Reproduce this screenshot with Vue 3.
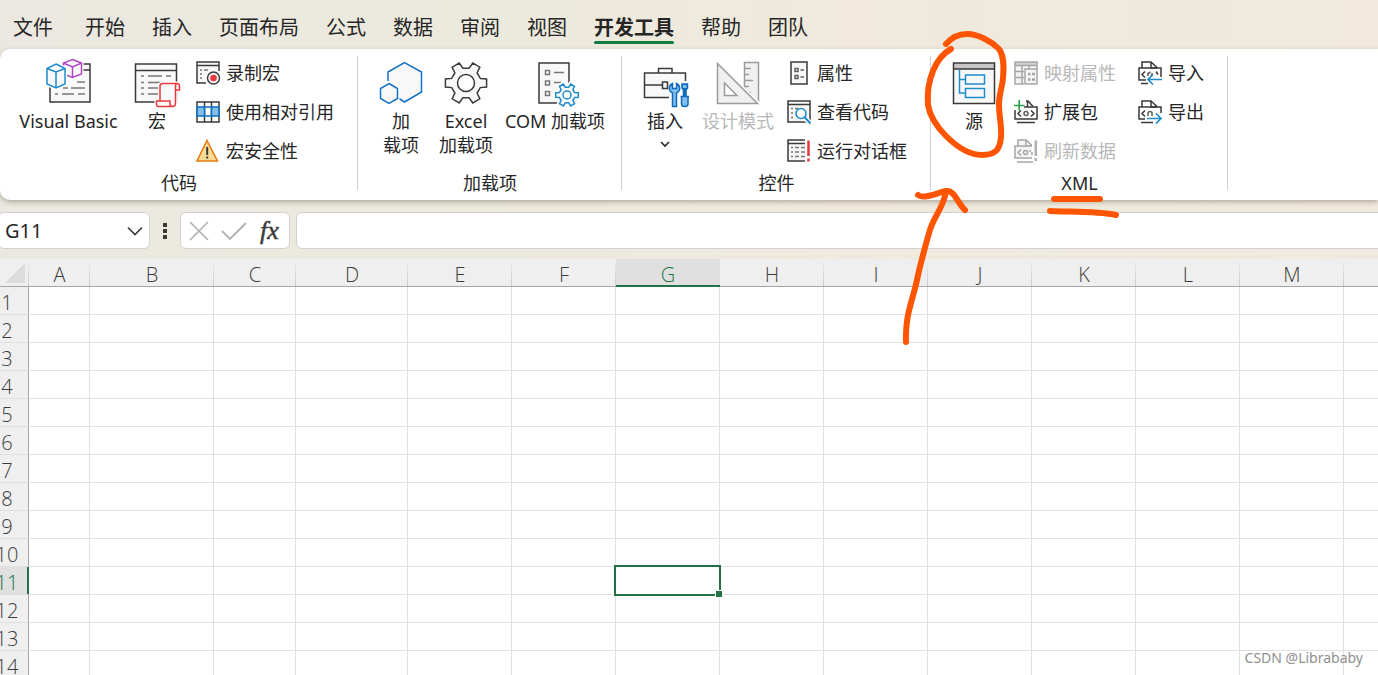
<template>
  <div class="workbook">
    <nav class="tabs">
      <button
        v-for="tab in tabs"
        :key="tab"
        type="button"
        :class="['tab', { active: tab === activeTab }]"
        @click="activeTab = tab"
      >{{ tab }}</button>
    </nav>

    <section class="ribbon">
      <div class="group group-code">
        <div class="group-body">
          <button type="button" class="big">
            <svg class="icon-big" viewBox="0 0 48 48">
              <path d="M35 3H45V41H5V22" fill="#f8f8f8" stroke="#3b3a39" stroke-width="1.5" />
              <path d="M37 9H45" stroke="#3b3a39" stroke-width="1.5" />
              <path d="M32 21H40M18 27H23M26 27H40M10 33H13M17 33H29M33 33H40" stroke="#797775" stroke-width="1.5" />
              <path d="M27.5 -1.5L36.5 2V13L27.5 16.5L18.5 13V2Z" fill="#fafafa" stroke="#fff" stroke-width="4" />
              <path d="M27.5 -1.5L36.5 2V13L27.5 16.5L18.5 13V2ZM18.5 2L27.5 6L36.5 2M27.5 6V16.5" fill="#fafafa" stroke="#b146c2" stroke-width="1.5" />
              <path d="M11 3L20 7.5V23L11 27L2 23V7.5Z" fill="#fafafa" stroke="#fff" stroke-width="4" />
              <path d="M11 3L20 7.5V23L11 27L2 23V7.5ZM2 7.5L11 11L20 7.5M11 11V27" fill="#fafafa" stroke="#1e8bcd" stroke-width="1.5" />
            </svg>
            <span>Visual Basic</span>
          </button>
          <button type="button" class="big">
            <svg class="icon-big" viewBox="0 0 48 48">
              <path d="M2.5 3H43.5V41H2.5Z" fill="#f8f8f8" stroke="#3b3a39" stroke-width="1.5" />
              <path d="M3 9.5H43" stroke="#3b3a39" stroke-width="1.5" />
              <path d="M8 15H11M15 15H29M33 15H38M8 21.5H11M15 21.5H30M8 27H11M15 27H26M8 33H11M15 33H25" stroke="#797775" stroke-width="1.5" />
              <path d="M27 39V25Q27 22.5 30 22.5H44Q46.5 22.5 46.5 25.5V29H42.5V42Q42.5 45.5 39 45.5H25Q23.5 45.5 23.5 43V40H27Z" fill="#fafafa" stroke="#fff" stroke-width="4" />
              <path d="M27 40V25Q27 22.5 30 22.5H44Q46.5 22.5 46.5 25.5V29H42.5V42Q42.5 45.5 39.5 45.5H25.5Q23.5 45.5 23.5 43V40H37V43Q37 45.5 39.5 45.5M42.5 29V25Q42.5 22.5 44 22.5" fill="#fafafa" stroke="#e8383d" stroke-width="1.5" />
            </svg>
            <span>宏</span>
          </button>
          <div class="column">
            <button type="button" class="small">
              <svg class="icon-small" viewBox="0 0 24 24">
                <path d="M10 22H1V1H23V10" fill="#f8f8f8" stroke="#3b3a39" stroke-width="1.5" />
                <path d="M1 4.5H23" stroke="#3b3a39" stroke-width="1.5" />
                <path d="M4 9H6M8 9H12M4 13H6M4 17H6" stroke="#797775" stroke-width="1.5" />
                <circle cx="17.5" cy="17" r="8" fill="#fff" />
                <circle cx="17.5" cy="17" r="6" fill="#fafafa" stroke="#3b3a39" stroke-width="1.5" />
                <circle cx="17.5" cy="17" r="3.3" fill="#e8383d" />
              </svg>
              <span>录制宏</span>
            </button>
            <button type="button" class="small">
              <svg class="icon-small" viewBox="0 0 24 24">
                <path d="M1 2H23V22H1ZM8.5 2V22M15.5 2V22" fill="#fff" stroke="#3b3a39" stroke-width="1.5" />
                <path d="M1 7H8.5V16H1ZM15.5 7H23V16H15.5Z" fill="#83beec" />
                <path d="M0 7H24M0 16H24M1 7V16M8.5 7V16M15.5 7V16M23 7V16" stroke="#0f6cbd" stroke-width="1.5" />
              </svg>
              <span>使用相对引用</span>
            </button>
            <button type="button" class="small">
              <svg class="icon-small" viewBox="0 0 24 24">
                <path d="M11 1.5L21.5 22H1Z" fill="#fadb93" stroke="#e8760e" stroke-width="1.5" />
                <path d="M11.2 8V16M11.2 17.5V19.5" stroke="#3b3a39" stroke-width="2" />
              </svg>
              <span>宏安全性</span>
            </button>
          </div>
        </div>
        <div class="group-title">代码</div>
      </div>

      <div class="group group-addins">
        <div class="group-body">
          <button type="button" class="big">
            <svg class="icon-big" viewBox="0 0 48 48">
              <path d="M11 20V11L27.5 1.5L44.5 11V31L27.5 41L22 38L20 26Z" fill="#f8f8f8" />
              <path d="M11 20V11L27.5 1.5L44.5 11V31L27.5 41L22 37.5" fill="none" stroke="#1473c4" stroke-width="1.5" />
              <path d="M12 22.5L20.5 27.5V37.5L12 42.5L3.5 37.5V27.5Z" fill="#fff" stroke="#fff" stroke-width="4" />
              <path d="M12 22.5L20.5 27.5V37.5L12 42.5L3.5 37.5V27.5Z" fill="#f8f8f8" stroke="#1473c4" stroke-width="1.5" />
            </svg>
            <span>加<br>载项</span>
          </button>
          <button type="button" class="big">
            <svg class="icon-big" viewBox="0 0 48 48">
              <path :d="gearPath(24, 22, 21, 15)" fill="#f8f8f8" stroke="#3b3a39" stroke-width="1.5" />
              <circle cx="24" cy="22" r="8.5" fill="#fff" stroke="#3b3a39" stroke-width="1.5" />
            </svg>
            <span>Excel<br>加载项</span>
          </button>
          <button type="button" class="big">
            <svg class="icon-big" viewBox="0 0 48 48">
              <path d="M38 22V2H8V42H27" fill="#f8f8f8" stroke="#3b3a39" stroke-width="1.5" />
              <path d="M14.5 9.5H18.5V13.5H14.5ZM14.5 20H18.5V24H14.5ZM14.5 30.5H18.5V34.5H14.5ZM23 11.5H33M23 21.5H30" fill="none" stroke="#797775" stroke-width="1.5" />
              <path :d="gearPath(36, 34, 11.5, 8)" fill="#fff" stroke="#fff" stroke-width="5" />
              <path :d="gearPath(36, 34, 11.5, 8)" fill="#f8f8f8" stroke="#1e8bcd" stroke-width="1.5" />
              <circle cx="36" cy="34" r="4" fill="#fff" stroke="#1e8bcd" stroke-width="1.5" />
            </svg>
            <span>COM 加载项</span>
          </button>
        </div>
        <div class="group-title">加载项</div>
      </div>

      <div class="group group-controls">
        <div class="group-body">
          <button type="button" class="big">
            <svg class="icon-big" viewBox="0 0 48 48">
              <path d="M17.5 12V7.5H31V12" fill="none" stroke="#3b3a39" stroke-width="1.5" />
              <path d="M28 36.5H3.5V12H44.5V21L28 26Z" fill="#f8f8f8" />
              <path d="M28 36.5H3.5V12H44.5V20M3.5 24H21.5M21.5 21H26.5V27.5H21.5Z" fill="none" stroke="#3b3a39" stroke-width="1.5" />
              <path d="M31.5 22.5V27.5H35.5V22.5Q38.7 24 38.7 27.5Q38.5 30.5 35.5 32V45.5H31.5V32Q28.5 30.5 28.3 27.5Q28.3 24 31.5 22.5Z" fill="#83beec" stroke="#0f6cbd" stroke-width="1.5" />
              <path d="M41 23H46.5V27L45 29V35H42.5V29L41 27Z" fill="#0f6cbd" stroke="#0f6cbd" stroke-width="1.5" />
              <path d="M42 25.5H45.5" stroke="#83beec" stroke-width="3" />
              <path d="M39.5 35.5H48M40.5 36V43Q40.5 45.5 43.7 45.5Q47 45.5 47 43V36" fill="#83beec" stroke="#0f6cbd" stroke-width="1.5" />
            </svg>
            <span>插入</span>
            <svg class="caret" viewBox="0 0 10 6"><path d="M1 1L5 5L9 1" fill="none" stroke="#262626" stroke-width="1.6" /></svg>
          </button>
          <button type="button" class="big" disabled>
            <svg class="icon-big" viewBox="0 0 48 48">
              <path d="M30.5 1.5H44.5V42H30.5Z" fill="#f0f0f0" stroke="#9b9b9b" stroke-width="1.5" />
              <path d="M31 7.5H37M31 13.5H35M31 19.5H39M31 25.5H35M31 31.5H37" stroke="#9b9b9b" stroke-width="1.5" />
              <path d="M3.5 2V42.5H44Z" fill="#f0f0f0" stroke="#fff" stroke-width="4" />
              <path d="M3.5 2.5V42.5H43.5Z" fill="#f0f0f0" stroke="#9b9b9b" stroke-width="1.5" />
              <path d="M10.5 22V34.5H23Z" fill="#fff" stroke="#9b9b9b" stroke-width="1.5" />
            </svg>
            <span>设计模式</span>
          </button>
          <div class="column">
            <button type="button" class="small">
              <svg class="icon-small" viewBox="0 0 24 24">
                <path d="M4 1H20V23H4Z" fill="#f8f8f8" stroke="#3b3a39" stroke-width="1.5" />
                <path d="M8 7.5H11V10.5H8ZM8 14.5H11V17.5H8ZM13.5 9H17M13.5 16H17" fill="none" stroke="#605e5c" stroke-width="1.5" />
              </svg>
              <span>属性</span>
            </button>
            <button type="button" class="small">
              <svg class="icon-small" viewBox="0 0 24 24">
                <path d="M1 1H23V22H1Z" fill="#f8f8f8" stroke="#3b3a39" stroke-width="1.5" />
                <path d="M1 4.5H23" stroke="#3b3a39" stroke-width="1.5" />
                <path d="M4 8.5H6M8 8.5H11M4 13H6M4 17.5H6" stroke="#797775" stroke-width="1.5" />
                <path d="M14 14L24 24" stroke="#fff" stroke-width="5" />
                <circle cx="14" cy="13.5" r="5" fill="#fff" stroke="#1e8bcd" stroke-width="1.6" />
                <path d="M17.5 17L23.5 23.5" stroke="#1e8bcd" stroke-width="2" />
              </svg>
              <span>查看代码</span>
            </button>
            <button type="button" class="small">
              <svg class="icon-small" viewBox="0 0 24 24">
                <path d="M18 22H1V1H18" fill="#f8f8f8" stroke="#3b3a39" stroke-width="1.5" />
                <path d="M1 4.5H18" stroke="#3b3a39" stroke-width="1.5" />
                <path d="M4 8.5H6M8 8.5H12M14 8.5H18M4 13H6M8 13H12M14 13H18M4 17.5H6M8 17.5H12M14 17.5H18" stroke="#797775" stroke-width="1.5" />
                <path d="M21.5 1.5V17M21.5 19.5V22.5" stroke="#e8383d" stroke-width="2.5" />
              </svg>
              <span>运行对话框</span>
            </button>
          </div>
        </div>
        <div class="group-title">控件</div>
      </div>

      <div class="group group-xml">
        <div class="group-body">
          <button type="button" class="big">
            <svg class="icon-big" viewBox="0 0 48 48">
              <path d="M3.5 2H44.5V42.5H3.5Z" fill="#f8f8f8" />
              <path d="M3.5 2H44.5V8H3.5Z" fill="#c8c6c4" />
              <path d="M3.5 2H44.5V42.5H3.5ZM3.5 8H44.5" fill="none" stroke="#3b3a39" stroke-width="1.5" />
              <path d="M9.5 8.5V32H15.5M9.5 18.5H15.5M15.5 14H34.5V23H15.5ZM15.5 27.5H34.5V36.5H15.5Z" fill="none" stroke="#1e8bcd" stroke-width="1.5" />
            </svg>
            <span>源</span>
          </button>
          <div class="column">
            <button type="button" class="small" disabled>
              <svg class="icon-small" viewBox="0 0 24 24">
                <path d="M1 1H23V23H1Z" fill="#f4f4f4" />
                <path d="M1 1H23V4.5H1Z" fill="#cfcfcf" />
                <path d="M10 23H1V1H23V8M1 4.5H23M8 4.5V23M15 4.5V8M1 10.5H10M1 16.5H10" fill="none" stroke="#a6a6a6" stroke-width="1.5" />
                <path d="M11 8H23V23H11Z" fill="#f4f4f4" stroke="#a6a6a6" stroke-width="1.5" />
                <path d="M14 13H16.5M14 18.5H16.5M18 13H21M18 18.5H21" stroke="#a6a6a6" stroke-width="2.5" />
              </svg>
              <span>映射属性</span>
            </button>
            <button type="button" class="small">
              <svg class="icon-small" viewBox="0 0 24 24">
                <path d="M12 1H14L19 6.5M13.5 1V7" fill="none" stroke="#3b3a39" stroke-width="1.5" />
                <path d="M1 10V19H23V7H10M3 22.5H21" fill="none" stroke="#3b3a39" stroke-width="1.5" />
                <path d="M7 10.5L4 13.5L7 16.5M17 10.5L20 13.5L17 16.5" fill="none" stroke="#3b3a39" stroke-width="1.5" />
                <circle cx="12" cy="13.5" r="2" fill="none" stroke="#605e5c" stroke-width="1.5" />
                <path d="M0 5.5H10.5M5.2 0V10.5" stroke="#2ea04f" stroke-width="1.7" />
              </svg>
              <span>扩展包</span>
            </button>
            <button type="button" class="small" disabled>
              <svg class="icon-small" viewBox="0 0 24 24">
                <path d="M4 7V1H12L18 6.5M12 1V7H18" fill="#f4f4f4" stroke="#a6a6a6" stroke-width="1.5" />
                <path d="M18 7H1V19H18M3 23H19" fill="#f4f4f4" stroke="#a6a6a6" stroke-width="1.5" />
                <path d="M7 10.5L4 13.5L7 16.5M16 11V13M18 13V16" fill="none" stroke="#a6a6a6" stroke-width="1.5" />
                <circle cx="11.5" cy="13.5" r="2" fill="none" stroke="#a6a6a6" stroke-width="1.5" />
                <path d="M21.8 1.5V17M21.8 19V22" stroke="#b0b0b0" stroke-width="2.5" />
              </svg>
              <span>刷新数据</span>
            </button>
          </div>
          <div class="column">
            <button type="button" class="small">
              <svg class="icon-small" viewBox="0 0 24 24">
                <path d="M4 7V1H13L19 6.5M13 1V7H19" fill="none" stroke="#3b3a39" stroke-width="1.5" />
                <path d="M8 19H1V7H23V16M3 22.5H10" fill="none" stroke="#3b3a39" stroke-width="1.5" />
                <path d="M7 10.5L4 13.5L7 16.5M18 10.5L20 13.5" fill="none" stroke="#3b3a39" stroke-width="1.5" />
                <path d="M10 15V12.5L12.5 11M14.5 12L13 15" fill="none" stroke="#605e5c" stroke-width="1.5" />
                <path d="M24 18.5H10M15 13.5L10 18.5L15 23.5" fill="none" stroke="#1e8bcd" stroke-width="1.7" />
              </svg>
              <span>导入</span>
            </button>
            <button type="button" class="small">
              <svg class="icon-small" viewBox="0 0 24 24">
                <path d="M4 7V1H13L19 6.5M13 1V7H19" fill="none" stroke="#3b3a39" stroke-width="1.5" />
                <path d="M7 19H1V7H23V13M3 22.5H15" fill="none" stroke="#3b3a39" stroke-width="1.5" />
                <path d="M7 10.5L4 13.5L7 16.5" fill="none" stroke="#3b3a39" stroke-width="1.5" />
                <path d="M10 16V12.5Q12 10.5 14 12.5V16" fill="none" stroke="#605e5c" stroke-width="1.5" />
                <path d="M9 18.5H23M18 13.5L23 18.5L18 23.5" fill="none" stroke="#1e8bcd" stroke-width="1.7" />
              </svg>
              <span>导出</span>
            </button>
          </div>
        </div>
        <div class="group-title">XML</div>
      </div>
    </section>

    <div class="formula-bar">
      <div class="name-box">
        <input v-model="cellName" type="text" aria-label="名称框">
        <button type="button" aria-label="展开名称框">
          <svg width="16" height="10" viewBox="0 0 16 10"><path d="M1 1.5L8 8.5L15 1.5" fill="none" stroke="#3b3a39" stroke-width="1.6" /></svg>
        </button>
      </div>
      <svg class="dots" width="4" height="16" viewBox="0 0 4 16"><path d="M0 0H4V4H0ZM0 6H4V10H0ZM0 12H4V16H0Z" fill="#3b3a39" /></svg>
      <div class="fx-box">
        <button type="button" aria-label="取消">
          <svg width="18" height="18" viewBox="0 0 18 18"><path d="M0 0L18 18M18 0L0 18" stroke="#b0b0b0" stroke-width="1.6" /></svg>
        </button>
        <button type="button" aria-label="输入">
          <svg width="24" height="18" viewBox="0 0 24 18"><path d="M0 9L8 17L24 1" fill="none" stroke="#b0b0b0" stroke-width="1.8" /></svg>
        </button>
        <button type="button" class="fx" aria-label="插入函数"><i>fx</i></button>
      </div>
      <input v-model="formula" class="formula-input" type="text" aria-label="编辑栏">
    </div>

    <div class="sheet">
      <table>
        <colgroup>
          <col class="col-head">
          <col v-for="(col, i) in columns" :key="i" :style="{ width: col.width + 'px' }">
        </colgroup>
        <thead>
          <tr>
            <th class="corner">
              <svg width="20" height="20" viewBox="0 0 20 20"><path d="M20 0V20H0Z" fill="#dcdcdc" /></svg>
            </th>
            <th v-for="(col, i) in columns" :key="i" :class="{ selected: col.name === 'G' }">{{ col.name }}</th>
          </tr>
        </thead>
        <tbody>
          <tr v-for="row in 14" :key="row">
            <th :class="{ selected: row === 11 }">{{ row }}</th>
            <td v-for="(col, i) in columns" :key="i" :class="{ current: col.name + row === 'G11' }"></td>
          </tr>
        </tbody>
      </table>
      <div class="watermark">CSDN @Librababy</div>
    </div>

    <!-- hand-drawn marks over the ribbon -->
    <svg class="marks" width="1240" height="360" viewBox="0 0 1240 360" aria-hidden="true">
      <path d="M946 44C952 37 959 34 967 34C978 34 991 41 999 49C1004 56 1004 66 1003 78C1002 89 999 94 999 104C999 117 1002 127 1001 137C1000 149 996 155 982 155C968 155 956 146 946 136C938 128 930 117 928 105C926 80 936 57 951 49" />
      <path d="M918 195C923 200 939 192 946 191C955 190 957 203 965 210" />
      <path d="M946 192C942 211 934 215 929 233C923 255 920 265 917 280C912 303 905 315 906 342" />
      <path d="M1054 199H1100" />
      <path d="M1050 211C1070 212 1098 211 1116 215" />
    </svg>
  </div>
</template>

<script setup>
import { ref } from 'vue';

const tabs = ['文件', '开始', '插入', '页面布局', '公式', '数据', '审阅', '视图', '开发工具', '帮助', '团队'];
const activeTab = ref('开发工具');
const cellName = ref('G11');
const formula = ref('');

// the last column only fills the right edge, so it carries no letter
const columns = [
  { name: 'A', width: 61 },
  { name: 'B', width: 124 },
  { name: 'C', width: 82 },
  { name: 'D', width: 112 },
  ...'EFGHIJKLM'.split('').map((name) => ({ name, width: 104 })),
  { name: '', width: 104 },
];

// six-tooth gear outline
function gearPath(cx, cy, outer, inner) {
  const points = [];
  const add = (deg, r) => {
    const a = (deg * Math.PI) / 180;
    points.push(`${(cx + r * Math.cos(a)).toFixed(1)} ${(cy + r * Math.sin(a)).toFixed(1)}`);
  };
  for (let deg = 0; deg < 360; deg += 60) {
    add(deg - 18, inner);
    add(deg - 11, outer);
    add(deg + 11, outer);
    add(deg + 18, inner);
  }
  return `M${points.join('L')}Z`;
}
</script>

<style>
body {
  margin: 0;
  overflow: hidden;
}
</style>

<style scoped>
.workbook {
  position: relative;
  display: flex;
  flex-direction: column;
  height: 100vh;
  overflow: hidden;
  background: linear-gradient(90deg, #ebe8e1 0%, #ece9dd 35%, #eeeadd 52%, #f1e9dd 62%, #eeeadd 75%, #f1e9dd 100%);
  color: #262626;
  font-family: "Noto Sans", "Noto Sans CJK SC", sans-serif;
  font-size: 18px;
}

button,
input {
  margin: 0;
  padding: 0;
  border: none;
  background: none;
  color: inherit;
  font: inherit;
}

button:disabled {
  color: #b8b8b8;
}

svg {
  display: block;
  flex: none;
  overflow: visible;
}

/* tabs */
.tabs {
  display: flex;
  gap: 27px;
  height: 49px;
  padding-left: 13px;
}

.tab {
  position: relative;
  height: 49px;
  padding-top: 4px;
  font-family: "Noto Sans CJK SC", sans-serif;
  font-size: 20px;
  line-height: 44px;
  white-space: nowrap;
}

.tab:first-child {
  margin-right: 5px;
}

.tab.active {
  font-weight: 700;
}

.tab.active::after {
  content: "";
  position: absolute;
  left: 0;
  right: 0;
  bottom: 5px;
  height: 3px;
  border-radius: 2px;
  background: #107c41;
}

/* ribbon */
.ribbon {
  display: flex;
  flex: none;
  background: #fff;
  border-radius: 10px 0 0 10px;
  box-shadow: 0 2px 5px rgba(80, 75, 50, 0.4);
}

.group {
  position: relative;
  display: flex;
  flex-direction: column;
  flex: none;
  padding: 5px 0 4px;
}

.group::after {
  content: "";
  position: absolute;
  top: 7px;
  right: 0;
  bottom: 10px;
  width: 1px;
  background: #d1d1d1;
}

.group-body {
  display: flex;
  gap: 13px;
  height: 116px;
  padding: 0 24px 0 19px;
}

.group-code .group-body {
  gap: 15px;
}

.group-code .big:first-child {
  min-width: 99px;
}

.group-addins .group-body {
  gap: 10px;
  padding: 0 15px;
}

.group-addins .big:first-child {
  min-width: 56px;
}

.group-addins .big:last-child {
  min-width: 104px;
}

.group-xml .group-body {
  gap: 16px;
}

.group-title {
  line-height: 26px;
  text-align: center;
}

.big {
  display: flex;
  flex-direction: column;
  align-items: center;
  min-width: 48px;
  padding-top: 7px;
  line-height: 24px;
  white-space: nowrap;
}

.icon-big {
  width: 48px;
  height: 48px;
}

.caret {
  width: 10px;
  height: 6px;
  margin-top: 8px;
}

.column {
  display: flex;
  flex-direction: column;
  gap: 1px;
}

.column + .column {
  margin-left: 6px;
}

.small {
  display: flex;
  align-items: center;
  gap: 6px;
  height: 38px;
  line-height: 24px;
  white-space: nowrap;
}

.icon-small {
  width: 24px;
  height: 24px;
}

/* formula bar */
.formula-bar {
  display: flex;
  align-items: center;
  flex: none;
  height: 37px;
  padding: 12px 0 10px;
}

.name-box,
.fx-box,
.formula-input {
  box-sizing: border-box;
  height: 37px;
  border: 1px solid #d1d1d1;
  border-radius: 6px;
  background: #fff;
}

.name-box {
  display: flex;
  align-items: center;
  justify-content: space-between;
  width: 152px;
  margin-left: -2px;
  padding: 0 6px;
}

.name-box input {
  width: 100px;
  font-size: 20px;
}

.dots {
  margin: 0 13px;
}

.fx-box {
  display: flex;
  align-items: center;
  gap: 14px;
  width: 110px;
  padding-left: 9px;
}

.fx {
  color: #3b3a39;
  font-family: "Liberation Serif", serif;
  font-size: 26px;
  line-height: 30px;
  -webkit-text-stroke: 0.5px #3b3a39;
}

.formula-input {
  flex: 1;
  margin: 0 -8px 0 6px;
  padding: 0 8px;
}

/* grid */
.sheet {
  position: relative;
  flex: 1;
  overflow: hidden;
  background: #fff;
}

table {
  width: 1460px;
  margin-left: -12px;
  border-collapse: separate;
  border-spacing: 0;
  table-layout: fixed;
}

.col-head {
  width: 41px;
}

th,
td {
  box-sizing: border-box;
  height: 28px;
  padding: 0;
  border-right: 1px solid #e0e0e0;
  border-bottom: 1px solid #e0e0e0;
}

th {
  padding-top: 4px;
  background: #efefef;
  color: #3b3b3b;
  font-family: "Open Sans", sans-serif;
  font-size: 20px;
  font-weight: 300;
  line-height: 22px;
}

thead th {
  border-right: none;
  border-bottom-color: #a6a6a6;
  background: linear-gradient(#efefef, #c8c8c8) right / 1px 100% no-repeat #efefef;
}

tbody th {
  padding-right: 2px;
  border-right-color: #a6a6a6;
}

thead .corner {
  padding-top: 0;
}

.corner svg {
  margin: 0 4px 0 auto;
}

thead .selected,
tbody .selected {
  background: #e0e0e0;
  color: #217346;
}

thead .selected {
  border-bottom-color: #217346;
  box-shadow: inset 0 -1px #217346;
}

tbody .selected {
  border-right-color: #217346;
  box-shadow: inset -1px 0 #217346;
}

.current {
  position: relative;
}

.current::before {
  content: "";
  position: absolute;
  inset: -2px;
  border: 2px solid #217346;
}

.current::after {
  content: "";
  position: absolute;
  right: -3px;
  bottom: -3px;
  width: 6px;
  height: 6px;
  background: #217346;
  box-shadow: 0 0 0 1px #fff;
}

.watermark {
  position: absolute;
  right: 15px;
  bottom: 7px;
  color: #8f8f8f;
  font-size: 14px;
  line-height: 20px;
}

.marks {
  position: absolute;
  top: 0;
  left: 0;
  pointer-events: none;
}

.marks path {
  fill: none;
  stroke: #ff5400;
  stroke-width: 6;
  stroke-linecap: round;
  stroke-linejoin: round;
}
</style>
